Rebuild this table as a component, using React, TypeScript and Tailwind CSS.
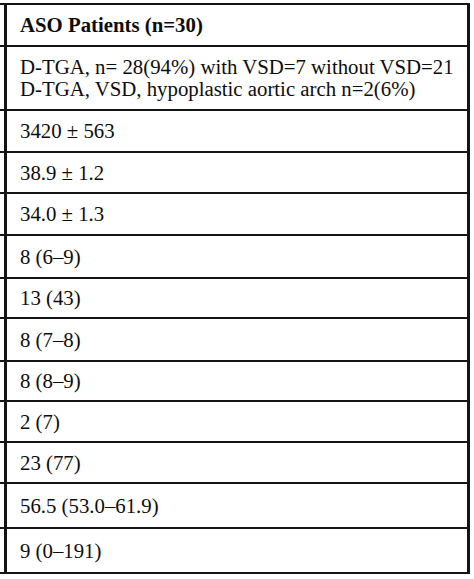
const rows: { h: number; lines: string[]; bold?: boolean }[] = [
  { h: 42, lines: ['ASO Patients (n=30)'], bold: true },
  {
    h: 64,
    lines: [
      'D-TGA, n= 28(94%) with VSD=7 without VSD=21',
      'D-TGA, VSD, hypoplastic aortic arch n=2(6%)',
    ],
  },
  { h: 42, lines: ['3420 ± 563'] },
  { h: 41, lines: ['38.9 ± 1.2'] },
  { h: 42, lines: ['34.0 ± 1.3'] },
  { h: 43, lines: ['8 (6–9)'] },
  { h: 40, lines: ['13 (43)'] },
  { h: 43, lines: ['8 (7–8)'] },
  { h: 40, lines: ['8 (8–9)'] },
  { h: 41, lines: ['2 (7)'] },
  { h: 41, lines: ['23 (77)'] },
  { h: 45, lines: ['56.5 (53.0–61.9)'] },
  { h: 45, lines: ['9 (0–191)'] },
];

export default function App() {
  return (
    <div
      className="w-[474px] h-[579px] bg-white pt-[3px] text-[#0d0d0d]"
      style={{ fontFamily: '"Liberation Serif", "Times New Roman", serif' }}
    >
      <div className="w-[470px] border-t-2 border-[#151515]">
        {rows.map((r, i) => (
          <div
            key={i}
            className="flex border-b-2 border-[#151515] box-border"
            style={{ height: r.h }}
          >
            <div className="w-[4px] shrink-0" />
            <div className="flex-1 border-l-[3px] border-r-[3px] border-[#151515] pl-[13px] flex flex-col justify-center">
              {r.lines.map((t, j) => (
                <div
                  key={j}
                  className={`text-[20.8px] leading-[22px] whitespace-nowrap ${r.bold ? 'font-bold' : ''}`}
                >
                  {t}
                </div>
              ))}
            </div>
          </div>
        ))}
      </div>
    </div>
  );
}
